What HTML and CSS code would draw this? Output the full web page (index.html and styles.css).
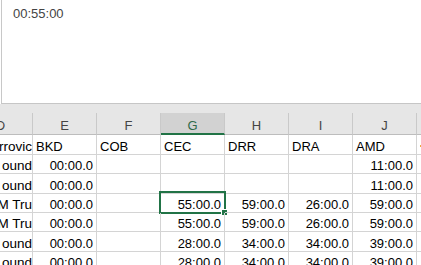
FILE: index.html
```html
<!DOCTYPE html>
<html>
<head>
<meta charset="utf-8">
<link rel="stylesheet" href="styles.css">
</head>
<body>
<div class="formula">00:55:00</div>
<div class="strip"></div>
<div class="sheet">
  <div class="hd">D</div><div class="hd">E</div><div class="hd">F</div><div class="hd sel">G</div><div class="hd">H</div><div class="hd">I</div><div class="hd">J</div><div class="hd"></div>

  <div class="c r1 clip">rrovic</div><div class="c r1">BKD</div><div class="c r1">COB</div><div class="c r1">CEC</div><div class="c r1">DRR</div><div class="c r1">DRA</div><div class="c r1">AMD</div><div class="c r1 k"><span class="mark"></span></div>

  <div class="c r2 clip">ound</div><div class="c r2 n">00:00.0</div><div class="c r2"></div><div class="c r2"></div><div class="c r2"></div><div class="c r2"></div><div class="c r2 n">11:00.0</div><div class="c r2"></div>

  <div class="c r1 clip">ound</div><div class="c r1 n">00:00.0</div><div class="c r1"></div><div class="c r1"></div><div class="c r1"></div><div class="c r1"></div><div class="c r1 n">11:00.0</div><div class="c r1"></div>

  <div class="c r2 clip">M Tru</div><div class="c r2 n">00:00.0</div><div class="c r2"></div><div class="c r2 n active">55:00.0<span class="outline"></span><span class="handle"></span></div><div class="c r2 n">59:00.0</div><div class="c r2 n">26:00.0</div><div class="c r2 n">59:00.0</div><div class="c r2"></div>

  <div class="c r2 clip">M Tru</div><div class="c r2 n">00:00.0</div><div class="c r2"></div><div class="c r2 n">55:00.0</div><div class="c r2 n">59:00.0</div><div class="c r2 n">26:00.0</div><div class="c r2 n">59:00.0</div><div class="c r2"></div>

  <div class="c r1 clip">ound</div><div class="c r1 n">00:00.0</div><div class="c r1"></div><div class="c r1 n">28:00.0</div><div class="c r1 n">34:00.0</div><div class="c r1 n">34:00.0</div><div class="c r1 n">39:00.0</div><div class="c r1"></div>

  <div class="c r2 clip">ound</div><div class="c r2 n">00:00.0</div><div class="c r2"></div><div class="c r2 n">28:00.0</div><div class="c r2 n">34:00.0</div><div class="c r2 n">34:00.0</div><div class="c r2 n">39:00.0</div><div class="c r2"></div>
</div>
</body>
</html>
```
FILE: styles.css
```css
html, body {
  margin: 0;
  padding: 0;
  background: #ffffff;
  overflow: hidden;
  width: 421px;
  height: 265px;
}
body {
  font-family: "Liberation Sans", Arial, sans-serif;
  font-size: 13px;
  line-height: 15px;
  color: #000;
}
.formula {
  box-sizing: border-box;
  height: 104px;
  margin-left: 1px;
  border-left: 1px solid #c8c8c8;
  border-bottom: 1px solid #c6c6c6;
  padding: 6px 0 0 11px;
  color: #444;
  background: #fff;
}
.strip {
  height: 9px;
  background: #e6e6e6;
}
.sheet {
  margin-left: -31px;
  display: grid;
  grid-template-columns: repeat(7, 64px) 40px;
  grid-template-rows: 22px 20px 19px 20px 19px 19px 20px 19px;
}
.hd {
  background: #e6e6e6;
  border-right: 1px solid #c9c9c9;
  border-bottom: 1px solid #bdbdbd;
  color: #444;
  display: flex;
  align-items: flex-end;
  justify-content: center;
  padding-bottom: 1px;
}
.hd.sel {
  background: #d2d2d2;
  border-bottom: 2px solid #217346;
  padding-bottom: 0;
  color: #2f6a4a;
}
.c {
  position: relative;
  border-right: 1px solid #d4d4d4;
  border-bottom: 1px solid #d4d4d4;
  display: flex;
  align-items: flex-end;
  padding: 0 3px;
  white-space: nowrap;
}
.c.n {
  justify-content: flex-end;
}
.c.clip {
  overflow: hidden;
  justify-content: flex-end;
  padding: 0;
  font-size: 13.5px;
}
.mark {
  position: absolute;
  left: 3px;
  top: 10px;
  width: 3px;
  height: 2px;
  background: #f0a840;
}
.outline {
  position: absolute;
  left: -2px;
  top: -3px;
  right: -2px;
  bottom: -2px;
  border: 2px solid #217346;
}
.handle {
  position: absolute;
  right: -4px;
  bottom: -4px;
  width: 5px;
  height: 5px;
  background: #217346;
  border: 1px solid #fff;
}
```
